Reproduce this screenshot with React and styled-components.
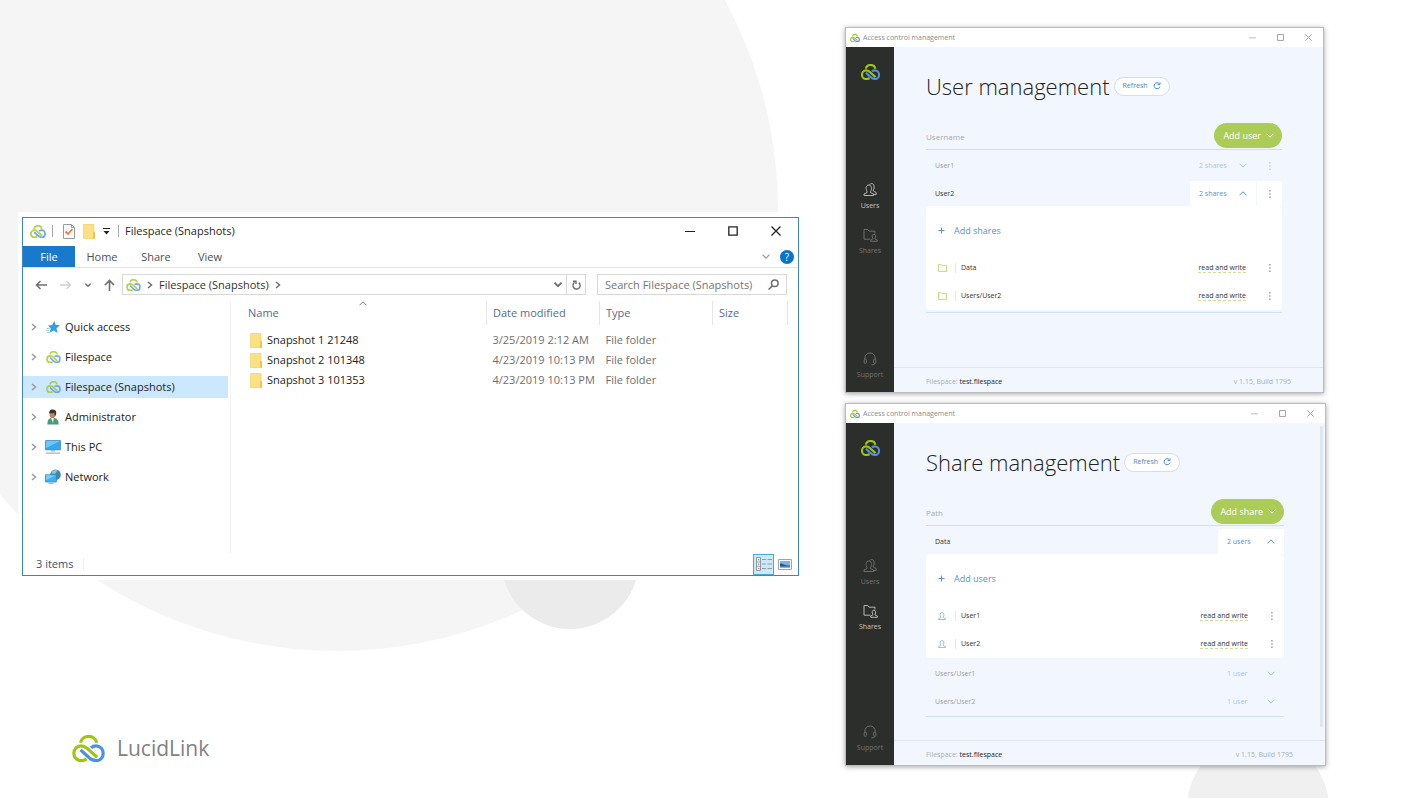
import React from "react";
import styled, { createGlobalStyle } from "styled-components";

const GlobalStyle = createGlobalStyle`
  *, *::before, *::after {
    box-sizing: border-box;
  }
  body {
    margin: 0;
    background: #fff;
    font-family: "Open Sans", "Noto Sans", "Liberation Sans", sans-serif;
  }
  button, input {
    font: inherit;
    color: inherit;
    border: 0;
    padding: 0;
    margin: 0;
    background: none;
  }
  input {
    outline: none;
    min-width: 0;
  }
  a {
    color: inherit;
    text-decoration: none;
  }
  svg {
    display: block;
    flex: none;
  }
`;

/* ---------- page ---------- */

const Page = styled.div`
  position: relative;
  overflow: hidden;
  min-height: 100vh;
`;

const Circle = styled.div`
  position: absolute;
  left: ${({ $x, $r }) => $x - $r}px;
  top: ${({ $y, $r }) => $y - $r}px;
  width: ${({ $r }) => $r * 2}px;
  height: ${({ $r }) => $r * 2}px;
  border-radius: 50%;
  background: ${({ $color }) => $color};
`;

const Columns = styled.main`
  position: relative;
  display: grid;
  grid-template-columns: minmax(0, 785fr) minmax(0, 481fr);
  gap: 42px;
  padding: 27px 96px 24px 18px;
`;

const LeftColumn = styled.div`
  padding-top: 185px;
`;

const RightColumn = styled.div`
  display: flex;
  flex-direction: column;
  gap: 10px;
`;

const Brand = styled.a`
  display: flex;
  align-items: center;
  gap: 12px;
  width: max-content;
  margin: 153px 0 0 54px;
  font-size: 21px;
  font-weight: 500;
  line-height: 30px;
  color: #808285;
`;

/* ---------- icons ---------- */

const Logo = ({ size, opacity = 1 }) => (
  <svg
    width={size}
    height={Math.round(size * 0.83)}
    viewBox="0 0 97 80"
    fill="none"
    strokeWidth={size > 24 ? 9.5 : 11}
    opacity={opacity}
    aria-hidden="true"
  >
    <path stroke="#9dc611" d="M25 23C29 -2 68 -2 73 23" />
    <path stroke="#4d90e6" d="M25 44L49 66C58 75 66 76 72 76C84 76 92 66 92 54C92 42 83 32 71 32C65 32 60 34 56 38" />
    <path stroke="#9dc611" d="M43 71C38 75 32 76 26 76C14 76 5 66 5 54C5 42 14 32 26 32C33 32 39 35 44 39L74 66" />
  </svg>
);

const Line = ({ w, h = w, box = `0 0 ${w} ${h}`, stroke = 1, children, color = "currentColor" }) => (
  <svg width={w} height={h} viewBox={box} fill="none" stroke={color} strokeWidth={stroke} aria-hidden="true">
    {children}
  </svg>
);

const ChevronRight = () => (
  <Line w={6} h={8} stroke={1.5}>
    <path d="M1 1L4.5 4L1 7" />
  </Line>
);

const ChevronDown = ({ w = 8, h = 5, stroke = 1 }) => (
  <Line w={w} h={h} box="0 0 8 5" stroke={stroke}>
    <path d="M0.5 0.7L4 4.2L7.5 0.7" />
  </Line>
);

const ChevronUp = ({ w = 8, h = 5 }) => (
  <Line w={w} h={h} box="0 0 8 5">
    <path d="M0.5 4.3L4 0.8L7.5 4.3" />
  </Line>
);

const Dots = () => (
  <svg width="2" height="8" viewBox="0 0 2 8" fill="currentColor" aria-hidden="true">
    <path d="M0.2 0h1.4v1.5H0.2zM0.2 3.2h1.4v1.5H0.2zM0.2 6.4h1.4v1.5H0.2z" />
  </svg>
);

const Folder = () => (
  <svg width="12" height="15" viewBox="0 0 12 15" aria-hidden="true">
    <path fill="#fbe084" stroke="#f0cd60" strokeWidth="0.6" d="M0.3 0.3H11V8.5H12V14.7H0.3Z" />
    <path fill="#edc54f" d="M10 8.3h2v6.4h-2z" />
  </svg>
);

const FolderOutline = ({ w = 9, h = 8 }) => (
  <Line w={w} h={h} box="0 0 9 8" stroke={0.8}>
    <path d="M0.5 7.4V0.6H3.3L4.1 1.7H8.5V7.4Z" />
  </Line>
);

const PersonOutline = () => (
  <Line w={8} h={8} stroke={0.8}>
    <path d="M0.5 7.5V6.6L2.8 5.6V5C1.7 3.8 1.7 0.5 4 0.5C6.3 0.5 6.3 3.8 5.2 5V5.6L7.5 6.6V7.5Z" />
  </Line>
);

const UsersIcon = () => (
  <Line w={14} h={16} box="0 0 14 16" stroke={0.9}>
    <path d="M1 13.5V12L4 10.6V9.4C2.6 7.5 2.6 3 5.8 3C9 3 9 7.5 7.6 9.4V10.6L10.6 12V13.5Z" />
    <path d="M6.5 2.8C7 1.9 7.8 1.5 8.6 1.5C11.6 1.5 11.6 6 10.3 7.8V9L13.2 10.6V12.5H11" />
  </Line>
);

const SharesIcon = () => (
  <Line w={15} h={16} box="0 0 15 16" stroke={0.9}>
    <path d="M7.5 12.2H1V2.5H4.8L6.1 4.2H12V6.5" />
    <path d="M7.8 14.3V13L9.8 12V11.2C8.7 9.8 8.9 7.2 10.9 7.2C12.9 7.2 13.1 9.8 12 11.2V12L14.3 13V14.3Z" />
  </Line>
);

const SupportIcon = () => (
  <Line w={14} h={16} box="0 0 14 16" stroke={0.9}>
    <path d="M1.8 8.5V7.4C1.8 4.2 4 2 7 2C10 2 12.2 4.2 12.2 7.4V8.5" />
    <rect x="1.2" y="8.2" width="2.2" height="4.2" rx="1" />
    <rect x="10.6" y="8.2" width="2.2" height="4.2" rx="1" />
    <path d="M12 12.4C11.6 13.5 10.6 13.9 8.4 13.9" />
  </Line>
);

const MinimizeIcon = () => (
  <Line w={10}>
    <path d="M0 5.5H10" />
  </Line>
);

const MaximizeIcon = ({ stroke }) => (
  <Line w={10} stroke={stroke}>
    <path d="M0.8 0.8H9.2V9.2H0.8Z" />
  </Line>
);

const CloseIcon = ({ stroke }) => (
  <Line w={10} stroke={stroke}>
    <path d="M0.5 0.5L9.5 9.5M9.5 0.5L0.5 9.5" />
  </Line>
);

const ReloadIcon = ({ size = 8 }) => (
  <Line w={size} box="0 0 8 8">
    <path d="M6.4 1.8A3 3 0 1 0 7 4.6" />
    <path d="M7 0.4V2.6H4.6" />
  </Line>
);

const ClipboardIcon = () => (
  <svg width="12" height="15" viewBox="0 0 12 15" fill="none" aria-hidden="true">
    <path fill="#fbfbfb" stroke="#9b9b9b" d="M0.5 0.5H8.5L11.5 3.5V14.5H0.5Z" />
    <path stroke="#9b9b9b" d="M8.5 0.5V3.5H11.5" />
    <path stroke="#ec7a45" strokeWidth="1.8" d="M2.5 7.5L5 10L9.5 5" />
  </svg>
);

const StarIcon = () => (
  <svg width="16" height="16" viewBox="0 0 16 16" aria-hidden="true">
    <path fill="#2f9fe6" d="M9.3 2L10.6 5.8L15 6.2L11.5 9.2L12.6 14L8.6 11.4L4.6 13.8L5.8 9.6L3 6.5L7.2 6Z" />
    <path stroke="#7cc3f0" strokeWidth="0.8" d="M1.5 9.5H4.5M1 11.5H4M2 13.5H4.5" />
  </svg>
);

const AdminIcon = () => (
  <svg width="16" height="16" viewBox="0 0 16 16" aria-hidden="true">
    <path fill="#4c9a78" d="M2.5 15.5C2 11.5 4 9.3 6.5 8.8L9.5 9C12.5 9.5 13.8 12 13.6 15.5Z" />
    <path fill="#eef5f0" d="M6 9L8 14L8.8 9Z" />
    <ellipse cx="7.5" cy="5.4" rx="2.9" ry="3.7" fill="#b98462" />
    <path fill="#3b3430" d="M4.3 4.5C3.8 1.5 6 0.4 8 0.6C11 0.8 12 3 10.8 6.4L9.8 6.8L9.4 4Z" />
  </svg>
);

const PcIcon = () => (
  <svg width="16" height="16" viewBox="0 0 16 16" aria-hidden="true">
    <path fill="#35a8ef" stroke="#3a7fb5" strokeWidth="0.8" d="M0.6 1.6H15.4V10.8H0.6Z" />
    <path fill="#6cc8fb" d="M1 2H15L1 9Z" />
    <path fill="#9fb4c6" d="M6 11.2h4v1.4H6zM1 13.4h14v1.4H1z" />
  </svg>
);

const NetworkIcon = () => (
  <svg width="16" height="16" viewBox="0 0 16 16" aria-hidden="true">
    <circle cx="10.5" cy="5.8" r="5.3" fill="#3c89ad" />
    <path fill="#8cc4d8" d="M7 2.4C9 0.8 11.5 0.6 12.4 1.4L10 5L6.4 4.6Z" />
    <path fill="#3eb2f3" stroke="#3b83b4" strokeWidth="0.8" d="M0.5 5.8H11.4V13H0.5Z" />
    <path fill="#7acefb" d="M1 6.2H11L1 11Z" />
    <path fill="#9fb4c6" d="M3.5 14h5v1.2h-5z" />
  </svg>
);

/* ---------- file explorer ---------- */

const ExplorerFrame = styled.div`
  padding: 5px 4px 4px;
  background: #fff;
`;

const Explorer = styled.section`
  border: 1px solid #3b86c6;
  background: #fff;
  font-size: 11px;
  line-height: 16px;
  color: #262626;
`;

const ExplorerTitle = styled.header`
  display: flex;
  align-items: center;
  gap: 6px;
  height: 28px;
  padding: 0 17px 2px 7px;
`;

const ExplorerName = styled.h2`
  margin: 0 auto 0 0;
  font-size: 11px;
  font-weight: 400;
`;

const Rule = styled.span`
  width: 1px;
  height: 12px;
  background: #a9a9a9;
`;

const QuickButtons = styled.div`
  display: flex;
  align-items: center;
  gap: 8px;
  padding: 0 2px 0 4px;
`;

const ExplorerControls = styled.div`
  display: flex;
  gap: 33px;
  color: #222;
`;

const Ribbon = styled.nav`
  display: flex;
  align-items: center;
  height: 22px;
  padding-right: 4px;
  border-bottom: 1px solid #e3e5e7;
  color: #4b5058;
`;

const RibbonTab = styled.a`
  width: ${({ $active }) => ($active ? 52 : 54)}px;
  line-height: 21px;
  text-align: center;
  background: ${({ $active }) => ($active ? "#1979ca" : "none")};
  color: ${({ $active }) => ($active ? "#fff" : "inherit")};
`;

const RibbonEnd = styled.div`
  display: flex;
  align-items: center;
  gap: 10px;
  margin-left: auto;
  color: #999;
`;

const Help = styled.button`
  width: 14px;
  height: 14px;
  border-radius: 50%;
  background: #0a74ce;
  color: #fff;
  font-size: 10px;
  line-height: 14px;
`;

const AddressRow = styled.div`
  display: flex;
  align-items: center;
  height: 33px;
  padding: 0 11px 0 12px;
`;

const NavButtons = styled.div`
  display: flex;
  align-items: center;
  gap: 13px;
  margin-right: 7px;
  color: #6e6e6e;
`;

const NavButton = styled.button`
  color: ${({ $off }) => ($off ? "#cfcfcf" : "inherit")};
`;

const Address = styled.div`
  flex: 1;
  display: flex;
  align-items: center;
  gap: 6px;
  height: 21px;
  padding-left: 3px;
  border: 1px solid #d9d9d9;
  color: #6e6e6e;

  a {
    color: #333;
  }
  button:first-of-type {
    margin-left: auto;
  }
`;

const AddressReload = styled.button`
  display: flex;
  align-items: center;
  justify-content: center;
  width: 19px;
  height: 100%;
  margin-left: -2px;
  border-left: 1px solid #d9d9d9;
`;

const Search = styled.label`
  display: flex;
  align-items: center;
  width: 190px;
  height: 21px;
  margin-left: 11px;
  padding: 0 7px;
  border: 1px solid #d9d9d9;
  color: #6e6e6e;

  input {
    flex: 1;
  }
  input::placeholder {
    color: #757575;
    opacity: 1;
  }
`;

const ExplorerBody = styled.div`
  display: grid;
  grid-template-columns: 208px minmax(0, 1fr);
  height: 252px;
`;

const Tree = styled.nav`
  display: flex;
  flex-direction: column;
  gap: 8px;
  padding: 15px 2px 0 0;
  border-right: 1px solid #f2f2f2;
`;

const TreeItem = styled.a`
  display: flex;
  align-items: center;
  height: 22px;
  padding-left: 8px;
  background: ${({ $selected }) => ($selected ? "#cce8ff" : "none")};
  color: #222;
`;

const TreeArrow = styled.span`
  width: 14px;
  color: #9a9a9a;
`;

const TreeIcon = styled.span`
  display: flex;
  justify-content: center;
  width: 16px;
  margin-right: 4px;
`;

const Files = styled.table`
  width: calc(100% - 10px);
  align-self: start;
  table-layout: fixed;
  border-collapse: collapse;
  color: #6f6f6f;

  th {
    position: relative;
    height: 24px;
    padding: 0 0 0 6px;
    border-right: 1px solid #e5e5e5;
    font-weight: 400;
    text-align: left;
    color: #5a6b8a;
  }
  th:first-child {
    padding-left: 17px;
  }
  td {
    height: 20px;
    padding: 0 0 0 6px;
    white-space: nowrap;
  }
  td:first-child {
    padding-left: 19px;
    color: #222;
  }
  tbody::before {
    content: "";
    display: block;
    height: 5px;
  }
`;

const SortMark = styled.span`
  position: absolute;
  top: 0;
  left: 50%;
  color: #777;
`;

const FileName = styled.a`
  display: flex;
  align-items: center;
  gap: 5px;
`;

const StatusBar = styled.footer`
  display: flex;
  align-items: center;
  height: 22px;
  padding: 0 3px 0 13px;
  color: #3c4f71;
`;

const ItemCount = styled.span`
  padding-right: 10px;
  margin-right: auto;
  line-height: 12px;
  border-right: 1px solid #f0f0f0;
`;

const ViewButton = styled.button`
  display: flex;
  align-items: center;
  justify-content: center;
  width: 21px;
  height: 21px;
  border: 1px solid ${({ $on }) => ($on ? "#44a9dc" : "transparent")};
  background: ${({ $on }) => ($on ? "#cbe9f8" : "none")};
`;

const treeItems = [
  { name: "Quick access", icon: <StarIcon /> },
  { name: "Filespace", icon: <Logo size={15} opacity={0.75} /> },
  { name: "Filespace (Snapshots)", icon: <Logo size={15} opacity={0.75} />, selected: true },
  { name: "Administrator", icon: <AdminIcon /> },
  { name: "This PC", icon: <PcIcon /> },
  { name: "Network", icon: <NetworkIcon /> },
];

const files = [
  { name: "Snapshot 1 21248", date: "3/25/2019 2:12 AM" },
  { name: "Snapshot 2 101348", date: "4/23/2019 10:13 PM" },
  { name: "Snapshot 3 101353", date: "4/23/2019 10:13 PM" },
];

const FileExplorer = () => (
  <ExplorerFrame>
    <Explorer>
      <ExplorerTitle>
        <Logo size={16} opacity={0.8} />
        <Rule />
        <QuickButtons>
          <button aria-label="Properties">
            <ClipboardIcon />
          </button>
          <button aria-label="New folder">
            <Folder />
          </button>
          <button aria-label="Customize toolbar">
            <svg width="7" height="8" viewBox="0 0 7 8" fill="#222" aria-hidden="true">
              <path d="M0 1h7v1H0zM0.5 4h6L3.5 7.5z" />
            </svg>
          </button>
        </QuickButtons>
        <Rule />
        <ExplorerName>Filespace (Snapshots)</ExplorerName>
        <ExplorerControls>
          <button aria-label="Minimize">
            <MinimizeIcon />
          </button>
          <button aria-label="Maximize">
            <MaximizeIcon stroke={1.3} />
          </button>
          <button aria-label="Close">
            <CloseIcon stroke={1.3} />
          </button>
        </ExplorerControls>
      </ExplorerTitle>
      <Ribbon>
        <RibbonTab href="#file" $active>
          File
        </RibbonTab>
        <RibbonTab href="#home">Home</RibbonTab>
        <RibbonTab href="#share">Share</RibbonTab>
        <RibbonTab href="#view">View</RibbonTab>
        <RibbonEnd>
          <ChevronDown stroke={1.2} />
          <Help>?</Help>
        </RibbonEnd>
      </Ribbon>
      <AddressRow>
        <NavButtons>
          <NavButton aria-label="Back">
            <Line w={12} h={10} stroke={1.5}>
              <path d="M12 5H1.5M5.5 1L1.5 5L5.5 9" />
            </Line>
          </NavButton>
          <NavButton aria-label="Forward" $off>
            <Line w={12} h={10} stroke={1.3}>
              <path d="M0 5H10.5M6.5 1L10.5 5L6.5 9" />
            </Line>
          </NavButton>
          <NavButton aria-label="Recent locations">
            <ChevronDown w={6} h={4} stroke={1.8} />
          </NavButton>
          <NavButton aria-label="Up">
            <Line w={11} h={12} stroke={1.6}>
              <path d="M5.5 12V1.5M1 6L5.5 1.5L10 6" />
            </Line>
          </NavButton>
        </NavButtons>
        <Address>
          <Logo size={15} opacity={0.75} />
          <ChevronRight />
          <a href="#snapshots">Filespace (Snapshots)</a>
          <ChevronRight />
          <button aria-label="Previous locations">
            <ChevronDown stroke={1.8} />
          </button>
          <AddressReload aria-label="Reload">
            <Line w={9} h={10} stroke={1.4}>
              <path d="M2.6 2.4A3.6 3.6 0 1 0 6.8 2.6" />
              <path d="M1 1.2H4V4.2" />
            </Line>
          </AddressReload>
        </Address>
        <Search>
          <input aria-label="Search" placeholder="Search Filespace (Snapshots)" />
          <Line w={11} h={11} stroke={1.5}>
            <circle cx="6.8" cy="4.2" r="3.3" />
            <path d="M4.6 6.6L0.6 10.5" />
          </Line>
        </Search>
      </AddressRow>
      <ExplorerBody>
        <Tree>
          {treeItems.map(({ name, icon, selected }) => (
            <TreeItem key={name} href="#tree" $selected={selected}>
              <TreeArrow>
                <ChevronRight />
              </TreeArrow>
              <TreeIcon>{icon}</TreeIcon>
              {name}
            </TreeItem>
          ))}
        </Tree>
        <Files>
          <colgroup>
            <col />
            <col width="113" />
            <col width="113" />
            <col width="75" />
          </colgroup>
          <thead>
            <tr>
              <th>
                Name
                <SortMark>
                  <ChevronUp />
                </SortMark>
              </th>
              <th>Date modified</th>
              <th>Type</th>
              <th>Size</th>
            </tr>
          </thead>
          <tbody>
            {files.map(({ name, date }) => (
              <tr key={name}>
                <td>
                  <FileName href="#folder">
                    <Folder />
                    {name}
                  </FileName>
                </td>
                <td>{date}</td>
                <td>File folder</td>
                <td />
              </tr>
            ))}
          </tbody>
        </Files>
      </ExplorerBody>
      <StatusBar>
        <ItemCount>3 items</ItemCount>
        <ViewButton aria-label="Details view" $on>
          <svg width="16" height="14" viewBox="0 0 16 14" fill="#fff" stroke="#8f9aa3" aria-hidden="true">
            <path d="M0.5 0.5H4.5V13.5H0.5ZM0.5 5H4.5M0.5 9.2H4.5" />
            <path d="M6 2.5H10M11.5 2.5H16M6 7H10M11.5 7H16M6 11.5H10M11.5 11.5H16" />
            <path stroke="none" fill="#7fae7c" d="M2 2h1.4v1.4H2z" />
            <path stroke="none" fill="#6e8fd8" d="M2 6.4h1.4v1.4H2z" />
            <path stroke="none" fill="#d9706c" d="M2 10.7h1.4v1.4H2z" />
          </svg>
        </ViewButton>
        <ViewButton aria-label="Thumbnail view">
          <svg width="14" height="11" viewBox="0 0 14 11" aria-hidden="true">
            <path fill="#fff" stroke="#a3a3a3" d="M0.5 0.5H13.5V10.5H0.5Z" />
            <path fill="#78b4ec" d="M2 2H12V9H2Z" />
            <path fill="#24557c" d="M2 4.4C5 4.4 7 6.6 12 6.4V7.6H2Z" />
          </svg>
        </ViewButton>
      </StatusBar>
    </Explorer>
  </ExplorerFrame>
);

/* ---------- access control windows ---------- */

const Window = styled.section`
  display: grid;
  grid-template: 19px minmax(0, 1fr) / 48px minmax(0, 1fr);
  min-height: ${({ $height }) => $height}px;
  margin-right: ${({ $inset }) => ($inset ? 2 : 0)}px;
  border: 1px solid #b9bbbf;
  background: #fff;
  box-shadow: 0 1px 5px rgba(0, 0, 0, 0.35);
  font-size: 7px;
  line-height: 10px;
  color: #333;
`;

const WindowTitle = styled.header`
  grid-column: 1 / -1;
  display: flex;
  align-items: center;
  gap: 3px;
  padding: 0 11px 0 4px;
  color: #8a8a8a;
`;

const WindowControls = styled.div`
  display: flex;
  gap: 21px;
  margin-left: auto;
  color: #a0a0a0;

  svg {
    width: 7px;
    height: 7px;
  }
`;

const Sidebar = styled.nav`
  display: flex;
  flex-direction: column;
  align-items: center;
  gap: 16px;
  padding: 17px 0 12px;
  background: #2c2e2b;
`;

const SidebarLogo = styled.a`
  margin-bottom: 86px;
`;

const SidebarItem = styled.a`
  display: flex;
  flex-direction: column;
  align-items: center;
  gap: 3px;
  color: ${({ $active }) => ($active ? "#c4c5c3" : "#747673")};

  &:last-child {
    margin-top: auto;
  }
`;

const Content = styled.div`
  position: relative;
  display: flex;
  flex-direction: column;
  background: #f2f7ff;
`;

const Main = styled.div`
  flex: 1;
  padding: 21px 41px 20px 32px;
`;

const Heading = styled.div`
  display: flex;
  align-items: center;
  gap: 4px;
  height: 36px;
`;

const HeadingText = styled.h1`
  margin: 0;
  font-size: 22px;
  line-height: 36px;
  font-weight: 300;
  color: #222;
`;

const Refresh = styled.button`
  display: flex;
  align-items: center;
  gap: 5px;
  height: 19px;
  padding: 0 8px;
  border: 1px solid #cfdff5;
  border-radius: 10px;
  background: #fff;
  color: #4c86cf;
`;

const FieldRow = styled.div`
  display: flex;
  align-items: flex-start;
  height: 27px;
  margin-top: 19px;
  border-bottom: 1px solid #cfe0f3;
`;

const Field = styled.input`
  flex: 1;
  height: 27px;
  font-size: 8px;

  &::placeholder {
    color: #a8acb1;
    opacity: 1;
  }
`;

const AddButton = styled.button`
  display: flex;
  align-items: center;
  gap: 5px;
  height: 25px;
  padding: 0 8px 0 9px;
  border-radius: 13px;
  background: #abcc57;
  color: #fff;
  font-size: 9px;
`;

const List = styled.div`
  display: flex;
  flex-direction: column;
  padding-bottom: 2px;
  border-bottom: 1px solid #cfe0f3;
`;

const ListRow = styled.div`
  display: flex;
  gap: 1px;
  height: 25px;
  margin-top: 3px;
  line-height: 25px;
  padding-left: 9px;
  color: ${({ $open }) => ($open ? "#333" : "#9a9fa6")};
`;

const RowName = styled.span`
  margin-right: auto;
`;

const Toggle = styled.button`
  display: flex;
  align-items: center;
  justify-content: space-between;
  width: 66px;
  padding: 0 9px;
  background: ${({ $open }) => ($open ? "#fff" : "none")};
  color: ${({ $open }) => ($open ? "#5b90d4" : "#a6c7ec")};
`;

const MoreButton = styled.button`
  display: flex;
  align-items: center;
  justify-content: center;
  width: 25px;
  background: ${({ $open }) => ($open ? "#fff" : "none")};
  color: ${({ $dim }) => ($dim ? "#bccbdd" : "#9c9c9c")};
`;

const Panel = styled.div`
  padding: 12px 0 0;
  border-radius: 4px;
  background: #fff;
`;

const AddEntry = styled.button`
  display: flex;
  align-items: center;
  gap: 9px;
  height: 25px;
  margin-bottom: 11px;
  padding-left: 12px;
  color: #5b90d4;
  font-size: 9px;
`;

const Entry = styled.div`
  display: flex;
  align-items: center;
  height: 28px;
  padding-left: 12px;
`;

const EntryIcon = styled.span`
  width: 17px;
  color: ${({ $color }) => $color};
`;

const EntryName = styled.span`
  margin-right: auto;
  padding-left: 5px;
  border-left: 1px solid #e6e9f2;
`;

const Access = styled.button`
  margin-right: 11px;
  line-height: 9px;
  border-bottom: 1px dashed #cfdf9b;
`;

const Footer = styled.footer`
  display: flex;
  justify-content: space-between;
  height: 25px;
  padding: 2px 32px 0;
  line-height: 24px;
  border-top: 1px solid #d9e7f7;
  color: #a9adb2;

  b {
    font-weight: 400;
    color: #222;
  }
`;

const Scrollbar = styled.div`
  position: absolute;
  top: 3px;
  right: 2px;
  bottom: 38px;
  width: 3px;
  border-radius: 2px;
  background: #dce7f5;
`;

const AccessWindow = ({ title, field, addLabel, addEntry, active, rows, height, inset, scroll }) => (
  <Window $height={height} $inset={inset}>
    <WindowTitle>
      <Logo size={10} />
      <span>Access control management</span>
      <WindowControls>
        <button aria-label="Minimize">
          <MinimizeIcon />
        </button>
        <button aria-label="Maximize">
          <MaximizeIcon stroke={1.4} />
        </button>
        <button aria-label="Close">
          <CloseIcon stroke={1.4} />
        </button>
      </WindowControls>
    </WindowTitle>
    <Sidebar>
      <SidebarLogo href="#start" aria-label="LucidLink">
        <Logo size={19} />
      </SidebarLogo>
      <SidebarItem href="#users" $active={active === "users"}>
        <UsersIcon />
        Users
      </SidebarItem>
      <SidebarItem href="#shares" $active={active === "shares"}>
        <SharesIcon />
        Shares
      </SidebarItem>
      <SidebarItem href="#support">
        <SupportIcon />
        Support
      </SidebarItem>
    </Sidebar>
    <Content>
      <Main>
        <Heading>
          <HeadingText>{title}</HeadingText>
          <Refresh>
            Refresh
            <ReloadIcon />
          </Refresh>
        </Heading>
        <FieldRow>
          <Field aria-label={field} placeholder={field} />
          <AddButton>
            {addLabel}
            <ChevronDown />
          </AddButton>
        </FieldRow>
        <List>
          {rows.map(({ name, count, more, entries }) => (
            <React.Fragment key={name}>
              <ListRow $open={!!entries}>
                <RowName>{name}</RowName>
                <Toggle $open={!!entries}>
                  {count}
                  {entries ? <ChevronUp /> : <ChevronDown />}
                </Toggle>
                {more && (
                  <MoreButton aria-label="More" $open={!!entries} $dim={!entries}>
                    <Dots />
                  </MoreButton>
                )}
              </ListRow>
              {entries && (
                <Panel>
                  <AddEntry>
                    <Line w={7}>
                      <path d="M3.5 0.5V6.5M0.5 3.5H6.5" />
                    </Line>
                    {addEntry}
                  </AddEntry>
                  {entries.map((entry) => (
                    <Entry key={entry}>
                      <EntryIcon $color={active === "users" ? "#b4d05e" : "#82aee6"}>
                        {active === "users" ? <FolderOutline /> : <PersonOutline />}
                      </EntryIcon>
                      <EntryName>{entry}</EntryName>
                      <Access>read and write</Access>
                      <MoreButton aria-label="More">
                        <Dots />
                      </MoreButton>
                    </Entry>
                  ))}
                </Panel>
              )}
            </React.Fragment>
          ))}
        </List>
      </Main>
      <Footer>
        <span>
          Filespace: <b>test.filespace</b>
        </span>
        <span>v 1.15, Build 1795</span>
      </Footer>
      {scroll && <Scrollbar />}
    </Content>
  </Window>
);

const userRows = [
  { name: "User1", count: "2 shares", more: true },
  { name: "User2", count: "2 shares", more: true, entries: ["Data", "Users/User2"] },
];

const shareRows = [
  { name: "Data", count: "2 users", entries: ["User1", "User2"] },
  { name: "Users/User1", count: "1 user" },
  { name: "Users/User2", count: "1 user" },
];

const App = () => (
  <Page>
    <GlobalStyle />
    <Circle $x={337} $y={210} $r={441} $color="#f5f5f5" />
    <Circle $x={570} $y={560} $r={69} $color="#ebebeb" />
    <Circle $x={1258} $y={808} $r={71} $color="#f0f0f0" />
    <Columns>
      <LeftColumn>
        <FileExplorer />
        <Brand href="#lucidlink">
          <Logo size={33} />
          LucidLink
        </Brand>
      </LeftColumn>
      <RightColumn>
        <AccessWindow
          title="User management"
          field="Username"
          addLabel="Add user"
          addEntry="Add shares"
          active="users"
          rows={userRows}
          height={366}
          inset
        />
        <AccessWindow
          title="Share management"
          field="Path"
          addLabel="Add share"
          addEntry="Add users"
          active="shares"
          rows={shareRows}
          height={363}
          scroll
        />
      </RightColumn>
    </Columns>
  </Page>
);

export default App;
